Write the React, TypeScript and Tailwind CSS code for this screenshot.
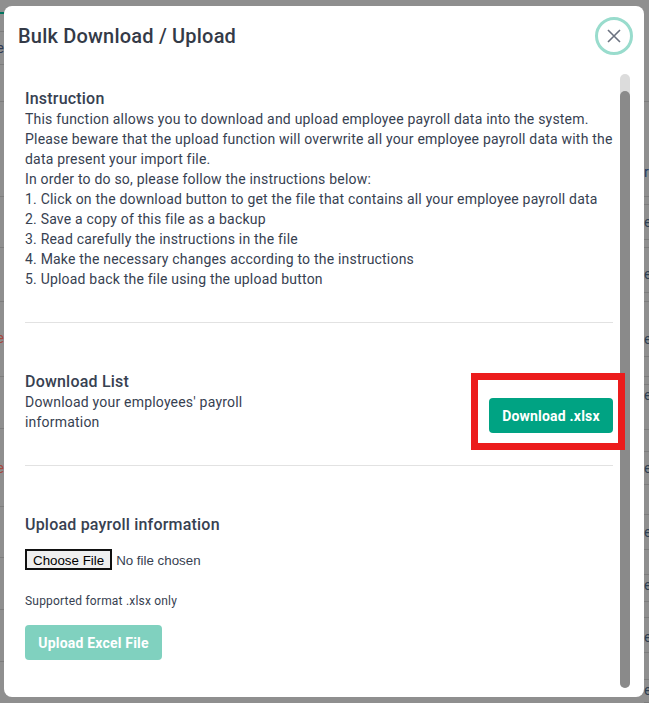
// y = bottom line of a table row behind the dialog, textY = centre of the clipped cell text
const leftRows = [
  { y: 32 },
  { y: 65, text: "e", textY: 48, color: "text-[#2f3a55]" },
  { y: 102 },
  { y: 197 },
  { y: 248 },
  { y: 302 },
  { y: 377, text: "e", textY: 338, color: "text-[#a5483f]" },
  { y: 429 },
  { y: 507, text: "e", textY: 468, color: "text-[#a5483f]" },
  { y: 558 },
  { y: 610 },
  { y: 662 },
];

const rightRows = [
  { y: 102 },
  { y: 197, text: "r", textY: 172, color: "text-[#1f3a5f]" },
  { y: 205 },
  { y: 240, text: "e", textY: 222 },
  { y: 248 },
  { y: 293, text: "e", textY: 274 },
  { y: 302 },
  { y: 357, text: "e", textY: 339 },
  { y: 377 },
  { y: 385 },
  { y: 430, text: "e", textY: 393 },
  { y: 452 },
  { y: 485, text: "e", textY: 468 },
  { y: 515 },
  { y: 550, text: "e", textY: 532 },
  { y: 575 },
  { y: 602, text: "e", textY: 585 },
  { y: 618 },
  { y: 653, text: "e", textY: 637 },
  { y: 680 },
  { y: 703, text: "e", textY: 688 },
];

function withTops<T extends { y: number }>(rows: T[]) {
  return rows.map((row, i) => ({ ...row, top: i === 0 ? 0 : rows[i - 1].y }));
}

const steps = [
  "This function allows you to download and upload employee payroll data into the system.",
  "Please beware that the upload function will overwrite all your employee payroll data with the data present your import file.",
  "In order to do so, please follow the instructions below:",
  "1. Click on the download button to get the file that contains all your employee payroll data",
  "2. Save a copy of this file as a backup",
  "3. Read carefully the instructions in the file",
  "4. Make the necessary changes according to the instructions",
  "5. Upload back the file using the upload button",
];

export default function App() {
  return (
    <div className="relative flex h-[703px] w-[649px] justify-between overflow-hidden bg-[#8f8f8f] font-['Roboto',sans-serif] text-sm tracking-[0.2px] text-[#374151]">
      {/* page behind the dialog */}
      <div className="relative w-1 overflow-hidden">
        {withTops(leftRows).map((row) => (
          <div
            key={row.y}
            style={{ height: row.y - row.top, paddingTop: row.text ? row.textY! - row.top - 10 : 0 }}
            className={`flex items-start justify-end border-b border-[#7d7d7d] leading-5 ${row.color ?? ""}`}
          >
            {row.text}
          </div>
        ))}
        <div className="absolute top-3 left-0 h-[2px] w-1 bg-[#00745e]" />
      </div>
      <div className="w-[5px] overflow-hidden">
        {withTops(rightRows).map((row) => (
          <div
            key={row.y}
            style={{ height: row.y - row.top, paddingTop: row.text ? row.textY! - row.top - 10 : 0 }}
            className={`flex items-start border-b border-[#7d7d7d] leading-5 ${row.color ?? "text-[#2f3f52]"}`}
          >
            {row.text}
          </div>
        ))}
      </div>

      {/* dialog */}
      <div className="absolute left-1 top-[6px] h-[691px] w-[640px] rounded-lg bg-white">
        <div className="flex h-[60px] items-center justify-between pl-[14px] pr-[11px]">
          <h2 className="text-xl leading-6 font-medium text-[#343a47]">Bulk Download / Upload</h2>
          <button className="flex h-[38px] w-[38px] items-center justify-center rounded-full border-[3px] border-[#99dccd]">
            <svg viewBox="0 0 16 16" className="h-4 w-4 text-[#6b7280]" fill="none" stroke="currentColor" strokeWidth="1.6">
              <path d="M2 2l12 12M14 2L2 14" />
            </svg>
          </button>
        </div>

        <div className="px-[21px] pt-[23px]">
          <h3 className="text-base leading-5 font-medium">Instruction</h3>
          <div className="w-[590px] leading-5">
            {steps.map((line) => (
              <p key={line}>{line}</p>
            ))}
          </div>

          <hr className="mt-[33px] w-[588px] border-[#e2e2e2]" />

          <div className="mt-[49px] flex w-[588px] items-start justify-between">
            <div className="w-[260px]">
              <h3 className="text-base leading-5 font-medium">Download List</h3>
              <p className="leading-5">Download your employees' payroll information</p>
            </div>
            <button className="mt-[26px] h-[35px] w-[124px] rounded bg-[#00a383] text-sm font-bold text-white">
              Download .xlsx
            </button>
          </div>

          <hr className="mt-[32px] w-[588px] border-[#e2e2e2]" />

          <h3 className="mt-[49px] text-base leading-5 font-medium">Upload payroll information</h3>
          <input
            type="file"
            className="mt-[14px] block w-[300px] font-['Liberation_Sans',sans-serif] text-[13.33px] tracking-normal file:mr-1 file:h-[21px] file:border-2 file:border-solid file:border-[#111111] file:bg-[#efefef] file:px-[6px] file:text-black"
          />
          <p className="mt-[23px] text-xs leading-4">Supported format .xlsx only</p>
          <button className="mt-[16px] h-[35px] w-[137px] rounded bg-[#80d1bf] text-sm font-bold text-white">
            Upload Excel File
          </button>
        </div>

        {/* scrollbar */}
        <div className="absolute top-[68px] left-[616px] h-[614px] w-[10px] rounded-full bg-[#dcdcdc]">
          <div className="mt-[17px] h-[597px] rounded-full bg-[#8a8a8a]" />
        </div>
      </div>

      {/* annotation */}
      <div className="absolute top-[373px] left-[471px] h-[77px] w-[154px] border-[7px] border-[#ec1c1c]" />
    </div>
  );
}
